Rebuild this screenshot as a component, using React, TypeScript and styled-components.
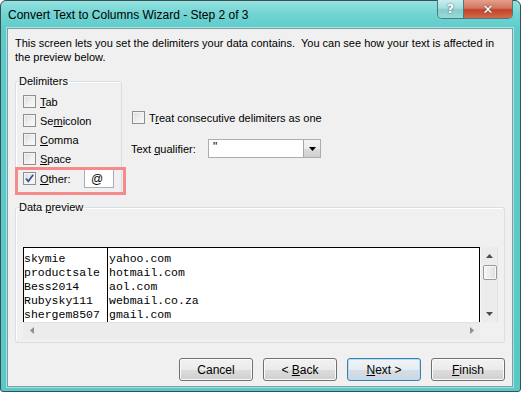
import React from 'react'
import styled, { createGlobalStyle, css } from 'styled-components'

const GlobalStyle = createGlobalStyle`
  html, body {
    margin: 0;
    padding: 0;
    background: #ffffff;
  }
  body {
    font-family: 'Liberation Sans', Arial, sans-serif;
    font-size: 11px;
    color: #000;
  }
`

const rows = [
  ['skymie', 'yahoo.com'],
  ['productsale', 'hotmail.com'],
  ['Bess2014', 'aol.com'],
  ['Rubysky111', 'webmail.co.za'],
  ['shergem8507', 'gmail.com'],
]

const Window = styled.div`
  width: 521px;
  height: 392px;
  box-sizing: border-box;
  border: 1px solid #3d4f52;
  border-radius: 6px 6px 3px 3px;
  padding: 0 7px 4px 6px;
  background: linear-gradient(180deg, #93e2e0 0px, #6fd3d1 14px, #5ccbc9 30px, #59c9c7 100%);
  display: flex;
  flex-direction: column;
`

const TitleBar = styled.div`
  height: 27px;
  flex-shrink: 0;
  display: flex;
  align-items: flex-start;
`

const Title = styled.div`
  font-size: 12px;
  padding: 7px 0 0 1px;
  color: #000;
`

const Caption = styled.div`
  margin-left: auto;
  margin-top: -1px;
  display: flex;
  border: 1px solid #4f7a7c;
  border-top: none;
  border-radius: 0 0 5px 5px;
  overflow: hidden;
`

const CaptionButton = styled.div<{ $close?: boolean }>`
  height: 18px;
  width: ${p => (p.$close ? 48 : 25)}px;
  display: flex;
  align-items: center;
  justify-content: center;
  color: #fff;
  font-family: 'DejaVu Sans', sans-serif;
  font-weight: bold;
  font-size: ${p => (p.$close ? 13 : 12)}px;
  text-shadow: 0 0 2px #444;
  background: ${p =>
    p.$close
      ? 'linear-gradient(180deg, #e4a08c 0%, #d27660 45%, #c0432b 55%, #d56a4a 100%)'
      : 'linear-gradient(180deg, #c6eeee 0%, #a5dede 45%, #84cccc 55%, #9adada 100%)'};
  & + & {
    border-left: 1px solid #4f7a7c;
  }
`

const Client = styled.div`
  flex: 1;
  min-height: 0;
  background: #f0f0f0;
  border: 1px solid #7e9ea2;
  box-shadow: 0 0 0 1px rgba(255, 255, 255, 0.45);
  padding: 0 7px 5px 7px;
  display: flex;
  flex-direction: column;
`

const Intro = styled.p`
  margin: 7px 0 0 0;
  line-height: 14px;
  white-space: nowrap;
`

const OptionsRow = styled.div`
  display: flex;
  margin-top: 10px;
`

const Group = styled.fieldset<{ $width?: number }>`
  margin: 0;
  padding: 0;
  border: 1px solid #d5dfe5;
  border-radius: 3px;
  box-shadow: inset 1px 1px 0 #fff;
  min-width: 0;
  ${p =>
    p.$width &&
    css`
      width: ${p.$width}px;
      box-sizing: border-box;
    `}
`

const Legend = styled.legend`
  margin-left: 3px;
  padding: 0 1px 0 0;
  line-height: 14px;
`

const CheckList = styled.div`
  padding: 4px 7px 3px 7px;
  display: flex;
  flex-direction: column;
`

const CheckRow = styled.label<{ $tall?: boolean }>`
  height: ${p => (p.$tall ? 21 : 19)}px;
  display: flex;
  align-items: center;
  gap: 4px;
  position: relative;
`

const Highlight = styled.span`
  position: absolute;
  left: -8px;
  top: -1px;
  right: -12px;
  bottom: -6px;
  border: 3px solid #f58a8a;
  pointer-events: none;
`

const Box = styled.span`
  width: 13px;
  height: 13px;
  box-sizing: border-box;
  border: 1px solid #8e8f8f;
  background: linear-gradient(135deg, #d9dbde 0%, #f1f1f1 60%, #fbfbfb 100%);
  box-shadow: inset 0 0 0 1px #f4f4f4;
  flex-shrink: 0;
  display: flex;
  align-items: center;
  justify-content: center;
`

const SmallInput = styled.div`
  margin-left: auto;
  margin-right: 0;
  width: 30px;
  height: 19px;
  box-sizing: border-box;
  border: 1px solid #abadb3;
  background: #fff;
  padding: 2px 0 0 6px;
  font-size: 12px;
`

const RightColumn = styled.div`
  margin-left: 10px;
  padding-top: 34px;
  display: flex;
  flex-direction: column;
`

const QualifierRow = styled.div`
  margin-top: 12px;
  display: flex;
  align-items: center;
  margin-left: -1px;
`

const QualifierLabel = styled.span`
  width: 77px;
`

const Combo = styled.div`
  width: 113px;
  height: 19px;
  box-sizing: border-box;
  border: 1px solid #abadb3;
  background: #fff;
  display: flex;
`

const ComboText = styled.div`
  flex: 1;
  padding: 0 0 0 4px;
  font-size: 12px;
  line-height: 15px;
`

const ComboButton = styled.div`
  width: 16px;
  border-left: 1px solid #a7a7a7;
  background: linear-gradient(180deg, #f3f3f3 0%, #ebebeb 50%, #dddddd 51%, #cfcfcf 100%);
  display: flex;
  align-items: center;
  justify-content: center;
`

const PreviewGroup = styled(Group)`
  margin-top: 7px;
`

const PreviewWrap = styled.div`
  padding: 33px 6px 3px 7px;
`

const PreviewGrid = styled.div`
  display: grid;
  grid-template-columns: 457px 18px;
  grid-template-rows: 75px 17px;
`

const DataArea = styled.div`
  background: #fff;
  border: 1px solid #000;
  border-bottom: none;
  display: flex;
  font-family: 'Liberation Mono', 'Courier New', monospace;
  font-size: 11.5px;
  line-height: 14px;
  overflow: hidden;
`

const DataColumn = styled.div<{ $first?: boolean }>`
  padding-top: 4px;
  white-space: pre;
  ${p =>
    p.$first
      ? css`
          width: 83px;
          border-right: 1px solid #000;
        `
      : css`
          padding-left: 1px;
          flex: 1;
        `}
`

const VScroll = styled.div`
  background: #ececec;
  display: flex;
  flex-direction: column;
  box-shadow: inset 1px 0 0 #f7f7f7, inset -1px 0 0 #e2e2e2;
`

const HScroll = styled.div`
  background: #ececec;
  display: flex;
  align-items: center;
  box-shadow: inset 0 1px 0 #e2e2e2;
`

const ArrowCell = styled.div<{ $horizontal?: boolean }>`
  width: ${p => (p.$horizontal ? '17px' : '100%')};
  height: ${p => (p.$horizontal ? '100%' : '17px')};
  display: flex;
  align-items: center;
  justify-content: center;
  flex-shrink: 0;
`

const Spacer = styled.div`
  flex: 1;
`

const Thumb = styled.div`
  width: 14px;
  height: 15px;
  margin-left: 3px;
  margin-top: 1px;
  box-sizing: border-box;
  border: 1px solid #9a9a9a;
  border-radius: 2px;
  background: linear-gradient(90deg, #f6f6f6 0%, #ececec 50%, #dcdcdc 100%);
  box-shadow: inset 0 0 0 1px #fafafa;
`

const Corner = styled.div`
  background: #f0f0f0;
`

const ButtonRow = styled.div`
  margin-top: auto;
  display: flex;
  justify-content: flex-end;
  gap: 10px;
`

const Button = styled.button<{ $focused?: boolean }>`
  width: 74px;
  height: 23px;
  font-family: inherit;
  font-size: 12px;
  color: #000;
  border-radius: 3px;
  padding: 0;
  border: 1px solid ${p => (p.$focused ? '#3c7fb1' : '#707070')};
  box-shadow: inset 0 0 0 1px ${p => (p.$focused ? '#b9dcf0' : '#fbfbfb')};
  background: ${p =>
    p.$focused
      ? 'linear-gradient(180deg, #eef4f8 0%, #e6edf2 50%, #d6dfe6 51%, #ccd6de 100%)'
      : 'linear-gradient(180deg, #f2f2f2 0%, #ebebeb 50%, #dddddd 51%, #cfcfcf 100%)'};
`

const Arrow: React.FC<{ dir: 'up' | 'down' | 'left' | 'right'; color?: string }> = ({ dir, color = '#4d4d4d' }) => {
  const pts = {
    up: '0,4 7,4 3.5,0',
    down: '0,0 7,0 3.5,4',
    left: '4,0 4,7 0,3.5',
    right: '0,0 0,7 4,3.5',
  }[dir]
  const vertical = dir === 'up' || dir === 'down'
  return (
    <svg width={vertical ? 7 : 4} height={vertical ? 4 : 7} viewBox={vertical ? '0 0 7 4' : '0 0 4 7'}>
      <polygon points={pts} fill={color} />
    </svg>
  )
}

const Check: React.FC<{ checked?: boolean }> = ({ checked }) => (
  <Box>
    {checked && (
      <svg width="11" height="11" viewBox="0 0 11 11">
        <path d="M2 5.5 L4.3 8.3 L9.2 1.8" fill="none" stroke="#3a4f95" strokeWidth="1.7" />
      </svg>
    )}
  </Box>
)

export default function App() {
  return (
    <>
      <GlobalStyle />
      <Window>
        <TitleBar>
          <Title>Convert Text to Columns Wizard - Step 2 of 3</Title>
          <Caption>
            <CaptionButton>?</CaptionButton>
            <CaptionButton $close>✕</CaptionButton>
          </Caption>
        </TitleBar>
        <Client>
          <Intro>
            This screen lets you set the delimiters your data contains.&nbsp; You can see how your text is affected in
            <br />
            the preview below.
          </Intro>
          <OptionsRow>
            <Group $width={107}>
              <Legend>Delimiters</Legend>
              <CheckList>
                <CheckRow>
                  <Check />
                  <span><u>T</u>ab</span>
                </CheckRow>
                <CheckRow>
                  <Check />
                  <span>Se<u>m</u>icolon</span>
                </CheckRow>
                <CheckRow>
                  <Check />
                  <span><u>C</u>omma</span>
                </CheckRow>
                <CheckRow>
                  <Check />
                  <span><u>S</u>pace</span>
                </CheckRow>
                <CheckRow $tall>
                  <Check checked />
                  <span><u>O</u>ther:</span>
                  <SmallInput>@</SmallInput>
                  <Highlight />
                </CheckRow>
              </CheckList>
            </Group>
            <RightColumn>
              <CheckRow>
                <Check />
                <span>T<u>r</u>eat consecutive delimiters as one</span>
              </CheckRow>
              <QualifierRow>
                <QualifierLabel>Text <u>q</u>ualifier:</QualifierLabel>
                <Combo>
                  <ComboText>"</ComboText>
                  <ComboButton>
                    <Arrow dir="down" color="#000" />
                  </ComboButton>
                </Combo>
              </QualifierRow>
            </RightColumn>
          </OptionsRow>
          <PreviewGroup>
            <Legend>Data <u>p</u>review</Legend>
            <PreviewWrap>
              <PreviewGrid>
                <DataArea>
                  <DataColumn $first>{rows.map(r => r[0]).join('\n')}</DataColumn>
                  <DataColumn>{rows.map(r => r[1]).join('\n')}</DataColumn>
                </DataArea>
                <VScroll>
                  <ArrowCell>
                    <Arrow dir="up" />
                  </ArrowCell>
                  <Thumb />
                  <Spacer />
                  <ArrowCell>
                    <Arrow dir="down" />
                  </ArrowCell>
                </VScroll>
                <HScroll>
                  <ArrowCell $horizontal>
                    <Arrow dir="left" color="#8c8c8c" />
                  </ArrowCell>
                  <Spacer />
                  <ArrowCell $horizontal>
                    <Arrow dir="right" color="#8c8c8c" />
                  </ArrowCell>
                </HScroll>
                <Corner />
              </PreviewGrid>
            </PreviewWrap>
          </PreviewGroup>
          <ButtonRow>
            <Button>Cancel</Button>
            <Button>&lt; <u>B</u>ack</Button>
            <Button $focused><u>N</u>ext &gt;</Button>
            <Button><u>F</u>inish</Button>
          </ButtonRow>
        </Client>
      </Window>
    </>
  )
}
